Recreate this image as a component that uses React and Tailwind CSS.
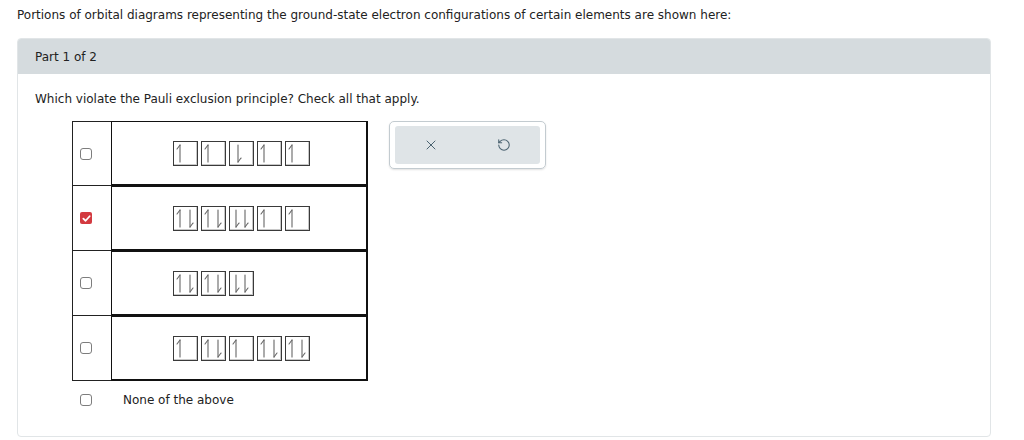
import React from "react";
import { RotateCcw, X } from "lucide-react";

const rows = [
  { checked: false, boxes: ["u", "u", "d", "u", "u"] },
  { checked: true, boxes: ["ud", "ud", "dd", "u", "u"] },
  { checked: false, boxes: ["ud", "ud", "dd"] },
  { checked: false, boxes: ["u", "ud", "u", "ud", "ud"] },
];

function Up({ x }) {
  return (
    <g stroke="#666" strokeWidth="1.1" fill="none" strokeLinecap="round">
      <line x1={x} y1="3" x2={x} y2="20" />
      <line x1={x} y1="3" x2={x - 3} y2="7" />
    </g>
  );
}
function Down({ x }) {
  return (
    <g stroke="#666" strokeWidth="1.1" fill="none" strokeLinecap="round">
      <line x1={x} y1="3" x2={x} y2="20" />
      <line x1={x} y1="20" x2={x + 3} y2="16" />
    </g>
  );
}

function Orbital({ kind }) {
  let content = null;
  if (kind === "u") content = <Up x={6} />;
  else if (kind === "d") content = <Down x={8} />;
  else if (kind === "ud") content = (<><Up x={6} /><Down x={16} /></>);
  else if (kind === "dd") content = (<><Down x={6} /><Down x={15} /></>);
  return (
    <div className="w-[25px] h-[25px] border border-[#3a3a3a] shadow-[inset_-1px_-1px_0_#c8c8c8] bg-white">
      <svg width="23" height="23" viewBox="0 0 23 23">{content}</svg>
    </div>
  );
}

function Checkbox({ checked }) {
  if (checked) {
    return (
      <div className="w-[12px] h-[12px] rounded-[2px] bg-[#d33a40] flex items-center justify-center">
        <svg width="9" height="9" viewBox="0 0 10 10">
          <path d="M1.5 5.2 L4 7.5 L8.5 2.5" stroke="white" strokeWidth="2" fill="none" strokeLinecap="round" strokeLinejoin="round" />
        </svg>
      </div>
    );
  }
  return <div className="w-[12px] h-[12px] rounded-[3px] border border-[#7d7d7d] bg-white" />;
}

export default function App() {
  return (
    <div className="w-[1024px] h-[440px] bg-white text-[#222] text-[12px] leading-[16px] overflow-hidden" style={{ fontFamily: '"DejaVu Sans", Verdana, sans-serif' }}>
      <p className="pl-[17px] pt-[7px]">
        Portions of orbital diagrams representing the ground-state electron configurations of certain elements are shown here:
      </p>
      <div className="ml-[17px] mr-[33px] mt-[15px] h-[399px] border border-[#e1e5e7] rounded-[4px] flex flex-col">
        <div className="h-[35px] bg-[#d5dbde] rounded-t-[3px] px-[17px] flex items-center">
          Part 1 of 2
        </div>
        <div className="px-[17px] pt-[17px]">
          <p>Which violate the Pauli exclusion principle? Check all that apply.</p>
          <div className="flex items-start mt-[14px]">
            <div className="ml-[37px] flex flex-col">
              {rows.map((r, i) => (
                <div key={i} className="flex">
                  <div className={"w-[39px] h-[65px] border-l border-b border-[#222] pl-[7px] flex items-center " + (i === 0 ? "border-t" : "")}>
                    <Checkbox checked={r.checked} />
                  </div>
                  <div className="w-[257px] h-[65px] border-l border-t border-r-2 border-b-2 border-[#111] pl-[61px] flex items-center gap-[3px]">
                    {r.boxes.map((b, j) => (
                      <Orbital key={j} kind={b} />
                    ))}
                  </div>
                </div>
              ))}
              <div className="flex items-center h-[38px]">
                <div className="w-[39px] pl-[8px]">
                  <Checkbox checked={false} />
                </div>
                <div className="pl-[12px]">None of the above</div>
              </div>
            </div>
            <div className="ml-[21px] w-[157px] h-[48px] border border-[#c3cbd0] rounded-[5px] shadow-[0_1px_2px_rgba(0,0,0,0.12)] px-[5px] py-[4px]">
              <div className="h-full bg-[#dfe4e7] rounded-[3px] flex">
                <div className="flex-1 flex items-center justify-center">
                  <X size={16} strokeWidth={1.5} color="#4a6270" />
                </div>
                <div className="flex-1 flex items-center justify-center">
                  <RotateCcw size={14} strokeWidth={1.8} color="#4a6270" />
                </div>
              </div>
            </div>
          </div>
        </div>
      </div>
    </div>
  );
}
